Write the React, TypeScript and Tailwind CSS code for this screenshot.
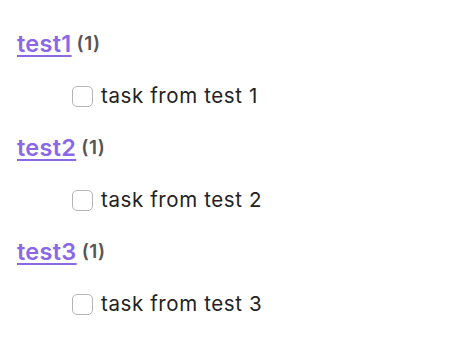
const groups = [
  { name: 'test1', count: 1, tasks: ['task from test 1'] },
  { name: 'test2', count: 1, tasks: ['task from test 2'] },
  { name: 'test3', count: 1, tasks: ['task from test 3'] },
];

export default function App() {
  return (
    <div className="min-h-screen bg-white pl-[17px] pt-[26px] font-['Inter',sans-serif]">
      {groups.map(g => (
        <div key={g.name} className="flex flex-col">
          <div className="flex h-[36px] items-center gap-[5px]">
            <a href="#" className="text-[23.5px] font-semibold tracking-[0.3px] text-[#8a68e6] underline decoration-[2px] underline-offset-[3px]">{g.name}</a>
            <span className="text-[19px] font-semibold tracking-[0.5px] text-[#555555]">({g.count})</span>
          </div>
          <ul className="flex flex-col pl-[55px] pt-[16px] pb-[16px]">
            {g.tasks.map(t => (
              <li key={t} className="flex h-[36px] items-center gap-[8px]">
                <span className="h-[21px] w-[21px] rounded-[5px] border-[1.5px] border-[#b5b5b5] bg-white" />
                <span className="text-[20.5px] tracking-[0.6px] text-[#222222]">{t}</span>
              </li>
            ))}
          </ul>
        </div>
      ))}
    </div>
  );
}
